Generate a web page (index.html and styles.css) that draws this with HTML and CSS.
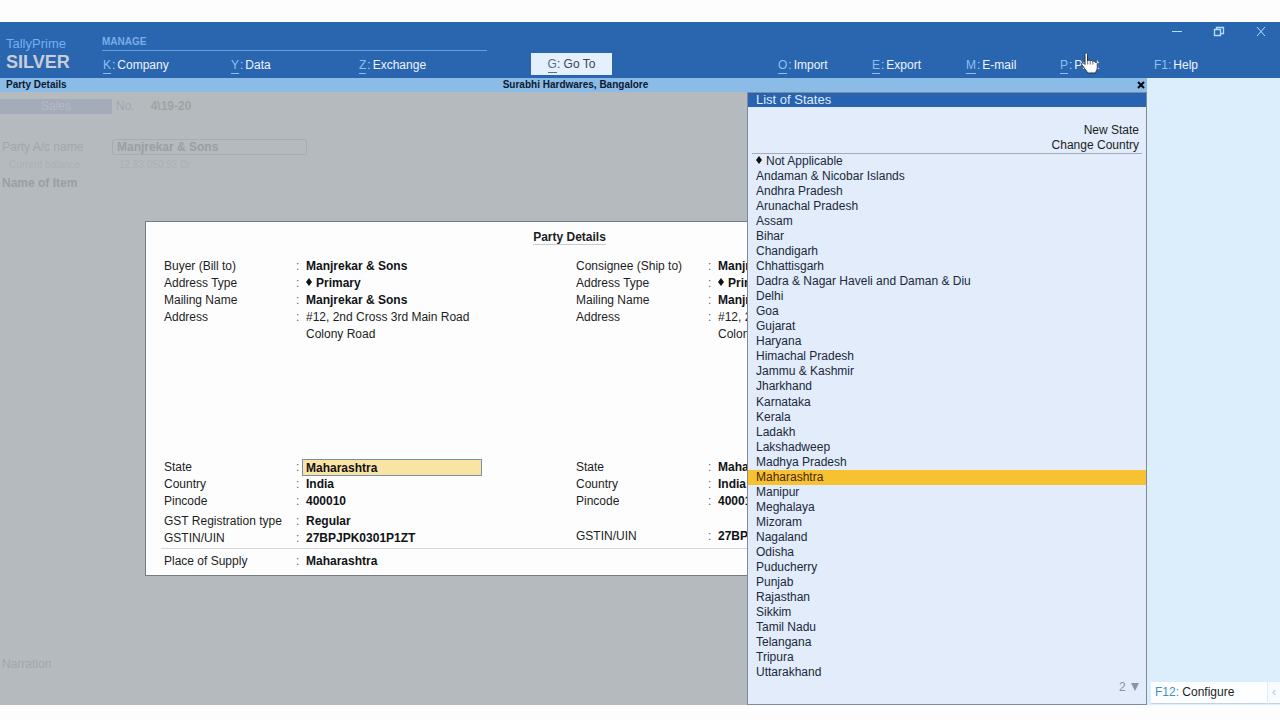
FILE: index.html
```html
<!DOCTYPE html>
<html lang="en">
<head>
    <meta charset="UTF-8">
    <meta name="viewport" content="width=device-width, initial-scale=1.0">
    <title>TallyPrime - Party Details</title>
    <link rel="stylesheet" href="styles.css">
</head>
<body>
    <div class="app">
        <header class="topbar">
            <div class="brand">
                <span class="brand-name">TallyPrime</span>
                <strong class="brand-edition">SILVER</strong>
            </div>
            <div class="manage">
                <div class="manage-title">MANAGE</div>
                <nav class="manage-menu">
                    <button type="button"><u>K</u><i>:</i>Company</button>
                    <button type="button"><u>Y</u><i>:</i>Data</button>
                    <button type="button"><u>Z</u><i>:</i>Exchange</button>
                </nav>
            </div>
            <button type="button" class="goto"><u>G</u>: Go To</button>
            <div class="right">
                <div class="window-controls">
                    <button type="button" aria-label="Minimize">
                        <svg width="12" height="12" viewBox="0 0 12 12"><path d="M1 6.500h10"/></svg>
                    </button>
                    <button type="button" aria-label="Restore">
                        <svg width="12" height="12" viewBox="0 0 12 12"><path d="M1.500 4.500h6v6h-6zM3.500 4.500v-2h7v6h-3" stroke-width="1.300"/></svg>
                    </button>
                    <button type="button" aria-label="Close">
                        <svg width="12" height="12" viewBox="0 0 12 12"><path d="M2 2l8 9M10 2l-8 9"/></svg>
                    </button>
                </div>
                <nav class="right-menu">
                    <button type="button"><u>O</u><i>:</i>Import</button>
                    <button type="button"><u>E</u><i>:</i>Export</button>
                    <button type="button"><u>M</u><i>:</i>E-mail</button>
                    <button type="button" class="print"><u>P</u><i>:</i>Print
                        <svg class="hand" width="18" height="24" viewBox="0 0 18 24"><path d="M4 2.500c0-2 2.500-2 2.500 0v6.500c.3-1.300 2.500-1.200 2.700.1.500-1 2.400-.7 2.600.5.600-.9 2.300-.5 2.400.8.600-.5 2.100-.1 2.100 1.100v4.500c0 2-1.500 3-1.700 5H6.500c-.5-2-2.500-3.500-4-6L.7 12.500c-.6-1.500 1.200-2.300 2.200-1.200L4 12.500z"/><path d="M6.700 9v3.500M9.200 9.500v3M11.800 10v2.500" stroke-width=".7"/></svg>
                    </button>
                    <button type="button"><b>F1:</b>Help</button>
                </nav>
            </div>
        </header>

        <div class="workspace">
            <main class="stage">
                <div class="titlebar">
                    <span class="screen-name">Party Details</span>
                    <span class="company-name">Surabhi Hardwares, Bangalore</span>
                    <button type="button" class="close-screen" aria-label="Close screen">
                        <svg width="8" height="8" viewBox="0 0 8 8"><path d="M1 1l6 6M7 1l-6 6"/></svg>
                    </button>
                </div>

                <!-- Voucher, dimmed behind the dialog -->
                <section class="voucher">
                    <div class="voucher-head">
                        <span class="voucher-type">Sales</span>
                        <span>No.</span>
                        <b class="voucher-no">4\19-20</b>
                    </div>
                    <div class="voucher-party">
                        <label for="party">Party A/c name</label>
                        <input type="text" id="party" value="Manjrekar &amp; Sons" disabled>
                    </div>
                    <div class="voucher-balance">
                        <span>Current balance</span>
                        <span>12,83,050.92 Dr</span>
                    </div>
                    <div class="voucher-items">Name of Item</div>
                    <div class="voucher-narration">Narration</div>
                </section>

                <section class="dialog">
                    <h1><span>Party Details</span></h1>
                    <div class="columns">
                        <div class="column">
                            <div class="group address">
                                <div class="field"><span>Buyer (Bill to)</span><i>:</i><b>Manjrekar &amp; Sons</b></div>
                                <div class="field"><span>Address Type</span><i>:</i><b><em class="diamond"></em>Primary</b></div>
                                <div class="field"><span>Mailing Name</span><i>:</i><b>Manjrekar &amp; Sons</b></div>
                                <div class="field"><span>Address</span><i>:</i><span>#12, 2nd Cross 3rd Main Road<br>Colony Road</span></div>
                            </div>
                            <div class="group">
                                <div class="field"><label for="state">State</label><i>:</i><input type="text" id="state" value="Maharashtra"></div>
                                <div class="field"><span>Country</span><i>:</i><b>India</b></div>
                                <div class="field"><span>Pincode</span><i>:</i><b>400010</b></div>
                            </div>
                            <div class="group gst">
                                <div class="field"><span>GST Registration type</span><i>:</i><b>Regular</b></div>
                                <div class="field"><span>GSTIN/UIN</span><i>:</i><b>27BPJPK0301P1ZT</b></div>
                            </div>
                        </div>
                        <div class="column">
                            <div class="group address">
                                <div class="field"><span>Consignee (Ship to)</span><i>:</i><b>Manjrekar &amp; Sons</b></div>
                                <div class="field"><span>Address Type</span><i>:</i><b><em class="diamond"></em>Primary</b></div>
                                <div class="field"><span>Mailing Name</span><i>:</i><b>Manjrekar &amp; Sons</b></div>
                                <div class="field"><span>Address</span><i>:</i><span>#12, 2nd Cross 3rd Main Road<br>Colony Road</span></div>
                            </div>
                            <div class="group">
                                <div class="field"><span>State</span><i>:</i><b>Maharashtra</b></div>
                                <div class="field"><span>Country</span><i>:</i><b>India</b></div>
                                <div class="field"><span>Pincode</span><i>:</i><b>400010</b></div>
                            </div>
                            <div class="group consignee-gst">
                                <div class="field"><span>GSTIN/UIN</span><i>:</i><b>27BPJPK0301P1ZT</b></div>
                            </div>
                        </div>
                    </div>
                    <div class="supply">
                        <div class="field"><span>Place of Supply</span><i>:</i><b>Maharashtra</b></div>
                    </div>
                </section>

                <aside class="states">
                    <h2>List of States</h2>
                    <div class="states-actions">
                        <button type="button">New State</button>
                        <button type="button">Change Country</button>
                    </div>
                    <ul role="listbox" aria-label="List of States">
                        <li role="option"><em class="diamond"></em>Not Applicable</li>
                        <li role="option">Andaman &amp; Nicobar Islands</li>
                        <li role="option">Andhra Pradesh</li>
                        <li role="option">Arunachal Pradesh</li>
                        <li role="option">Assam</li>
                        <li role="option">Bihar</li>
                        <li role="option">Chandigarh</li>
                        <li role="option">Chhattisgarh</li>
                        <li role="option">Dadra &amp; Nagar Haveli and Daman &amp; Diu</li>
                        <li role="option">Delhi</li>
                        <li role="option">Goa</li>
                        <li role="option">Gujarat</li>
                        <li role="option">Haryana</li>
                        <li role="option">Himachal Pradesh</li>
                        <li role="option">Jammu &amp; Kashmir</li>
                        <li role="option">Jharkhand</li>
                        <li role="option">Karnataka</li>
                        <li role="option">Kerala</li>
                        <li role="option">Ladakh</li>
                        <li role="option">Lakshadweep</li>
                        <li role="option">Madhya Pradesh</li>
                        <li role="option" class="selected" aria-selected="true">Maharashtra</li>
                        <li role="option">Manipur</li>
                        <li role="option">Meghalaya</li>
                        <li role="option">Mizoram</li>
                        <li role="option">Nagaland</li>
                        <li role="option">Odisha</li>
                        <li role="option">Puducherry</li>
                        <li role="option">Punjab</li>
                        <li role="option">Rajasthan</li>
                        <li role="option">Sikkim</li>
                        <li role="option">Tamil Nadu</li>
                        <li role="option">Telangana</li>
                        <li role="option">Tripura</li>
                        <li role="option">Uttarakhand</li>
                    </ul>
                    <div class="states-more">2 <span class="arrow-down"></span></div>
                </aside>
            </main>

            <aside class="sidebar">
                <div class="sidebar-bottom">
                    <button type="button" class="configure"><b>F12:</b> Configure</button>
                    <button type="button" class="collapse">‹</button>
                </div>
            </aside>
        </div>
    </div>
</body>
</html>
```
FILE: styles.css
```css
* {
    box-sizing: border-box;
}

body {
    margin: 0;
    background-color: #fdfdfd;
    font-family: "Liberation Sans", Arial, sans-serif;
    font-size: 12px;
    line-height: 17px;
    color: #1c1e24;
}

button {
    font: inherit;
    color: inherit;
    background: none;
    border: none;
    padding: 0;
    text-align: left;
    white-space: nowrap;
    cursor: pointer;
}

i {
    font-style: normal;
}

.app {
    display: flex;
    flex-direction: column;
    min-height: 100vh;
    padding: 22px 0 15px;
}

/* Top bar */
.topbar {
    display: flex;
    height: 56px;
    background-color: #2a65b0;
    color: #eef5ff;
}

.topbar u {
    display: inline-block;
    text-decoration: none;
    line-height: 16px;
    border-bottom: 1px solid #8dc0f2;
    color: #8dc0f2;
}

.topbar i {
    margin: 0 2px 0 1px;
    color: #a9d2fa;
}

.brand {
    width: 102px;
    padding: 13px 0 0 6px;
}

.brand span,
.brand strong {
    display: block;
}

.brand-name {
    font-size: 13px;
    color: #74b0ee;
}

.brand-edition {
    font-size: 18px;
    line-height: 20px;
    color: #c8cdd6;
}

.manage {
    width: 385px;
}

.manage-title {
    height: 29px;
    padding-top: 12px;
    border-bottom: 1px solid #5f9fe0;
    font-size: 10px;
    line-height: 16px;
    font-weight: bold;
    color: #78aee6;
}

.manage-menu {
    display: grid;
    grid-template-columns: repeat(3, 1fr);
    padding: 6px 0 0 1px;
}

.goto {
    align-self: flex-end;
    width: 81px;
    height: 22px;
    margin: 0 0 3px 44px;
    background-color: #e4f0fd;
    color: #3c4656;
    text-align: center;
}

.topbar .goto u {
    color: #5a6e8c;
    border-color: #5a6e8c;
}

.right {
    margin-left: auto;
}

.window-controls {
    display: flex;
    justify-content: flex-end;
    gap: 30px;
    height: 35px;
    padding: 3px 13px 0 0;
}

.window-controls button {
    height: 12px;
}

.window-controls svg {
    display: block;
    fill: none;
    stroke: #b8dcff;
}

.right-menu {
    display: grid;
    grid-template-columns: repeat(4, 94px) 126px;
}

.right-menu b {
    font-weight: normal;
    margin-right: 2px;
    color: #8dc0f2;
}

.print {
    position: relative;
}

.hand {
    position: absolute;
    left: 21px;
    top: -5px;
    fill: #ffffff;
    stroke: #26324a;
}

/* Work area */
.workspace {
    display: flex;
    flex: 1;
}

.stage {
    position: relative;
    display: flex;
    flex-direction: column;
    flex: 1;
    background-color: #b5babe;
}

.titlebar {
    display: flex;
    align-items: center;
    justify-content: space-between;
    height: 14px;
    padding: 0 2px 0 6px;
    background-color: #8bbce8;
    font-size: 10px;
    line-height: 14px;
    font-weight: bold;
    color: #0c1830;
}

.screen-name,
.close-screen {
    flex: 1;
}

.close-screen {
    display: flex;
    justify-content: flex-end;
}

.close-screen svg {
    fill: none;
    stroke: #05080f;
    stroke-width: 2;
}

/* Voucher behind the dialog */
.voucher {
    display: flex;
    flex-direction: column;
    flex: 1;
    padding-top: 7px;
    color: #a2a7ab;
}

.voucher-head {
    display: flex;
    gap: 4px;
    line-height: 15px;
}

.voucher-type {
    width: 112px;
    background-color: #a4acba;
    color: #b2b9c4;
    text-align: center;
}

.voucher-no {
    margin-left: 12px;
    color: #9da4a3;
}

.voucher-party,
.voucher-balance {
    display: grid;
    grid-template-columns: 110px 195px;
    padding-left: 2px;
}

.voucher-party {
    margin-top: 25px;
}

.voucher-party input {
    height: 16px;
    padding: 0 4px;
    border: 1px solid #a7acb1;
    border-radius: 2px;
    background: none;
    font: bold 12px "Liberation Sans", Arial, sans-serif;
    color: #9a9fa4;
}

.voucher-balance {
    font-size: 10px;
    color: #abb0b4;
}

.voucher-balance span {
    padding-left: 7px;
}

.voucher-items {
    margin-top: 2px;
    padding-left: 2px;
    font-weight: bold;
    color: #9a9fa4;
}

.voucher-narration {
    margin-top: auto;
    padding: 0 0 32px 2px;
}

/* Party details dialog */
.dialog {
    position: absolute;
    top: 143px;
    left: 145px;
    right: 153px;
    padding: 7px 15px 5px;
    border: 1px solid #757d84;
    background-color: #fdfdfd;
    overflow: hidden;
}

.dialog h1 {
    margin: 0 0 13px;
    font-size: 12px;
    line-height: 16px;
    text-align: center;
}

.dialog h1 span {
    display: inline-block;
    line-height: 14px;
    border-bottom: 1px solid #c9cbce;
}

.columns {
    display: grid;
    grid-template-columns: 412px 1fr;
    padding: 0 0 1px 3px;
}

.address {
    min-height: 201px;
}

.gst {
    margin-top: 3px;
}

.consignee-gst {
    margin-top: 18px;
}

.field {
    display: grid;
    grid-template-columns: 132px 10px 1fr;
    white-space: nowrap;
}

.field i {
    color: #5d6268;
}

.field b {
    color: #101216;
}

.field input {
    width: 180px;
    height: 17px;
    margin-left: -4px;
    padding: 0 3px;
    border: 1px solid #6f93ad;
    background-color: #fbe3a3;
    font: bold 12px "Liberation Sans", Arial, sans-serif;
    color: #101216;
    outline: none;
}

.supply {
    padding: 4px 0 0 3px;
    border-top: 1px solid #d3d5d8;
}

.diamond {
    display: inline-block;
    width: 6px;
    height: 8px;
    margin: 0 4px 1px 0;
    background-color: #101216;
    clip-path: polygon(50% 0, 100% 50%, 50% 100%, 0 50%);
}

/* List of states */
.states {
    position: absolute;
    top: 14px;
    right: 0;
    bottom: 0;
    width: 400px;
    display: flex;
    flex-direction: column;
    border: 1px solid #7f8b98;
    background-color: #e2ecfa;
}

.states h2 {
    margin: 0;
    padding-left: 8px;
    background-color: #2863b1;
    color: #dcebfb;
    font-size: 13px;
    line-height: 14px;
    font-weight: normal;
}

.states-actions {
    display: flex;
    flex-direction: column;
    align-items: flex-end;
    margin: 0 4px;
    padding: 16px 3px 0 0;
    border-bottom: 1px solid #a4acb8;
    line-height: 15px;
}

.states ul {
    display: flex;
    flex-direction: column;
    flex: 1;
    margin: 0;
    padding: 0;
    list-style: none;
    line-height: 15px;
    color: #20283a;
}

.states li {
    flex: 1;
    padding-left: 8px;
}

.states li.selected {
    background-color: #f6c232;
    color: #4a2508;
}

.states-more {
    height: 24px;
    padding-right: 7px;
    line-height: 15px;
    text-align: right;
    color: #8a94a6;
}

.arrow-down {
    display: inline-block;
    margin-left: 2px;
    border: 4px solid transparent;
    border-top: 8px solid #8a94a6;
    border-bottom: none;
}

/* Right button bar */
.sidebar {
    display: flex;
    flex-direction: column;
    justify-content: flex-end;
    width: 133px;
    background-color: #dceefc;
}

.sidebar-bottom {
    display: flex;
    gap: 1px;
    margin: 0 0 1px 4px;
    line-height: 21px;
}

.configure {
    flex: 1;
    padding-left: 4px;
    background-color: #fdfeff;
    border-bottom: 1px solid #c5d3de;
}

.configure b {
    font-weight: normal;
    color: #4492b8;
}

.collapse {
    width: 12px;
    background-color: #f7fbff;
    border-bottom: 1px solid #c5d3de;
    color: #bcc8d2;
    text-align: center;
}
```
